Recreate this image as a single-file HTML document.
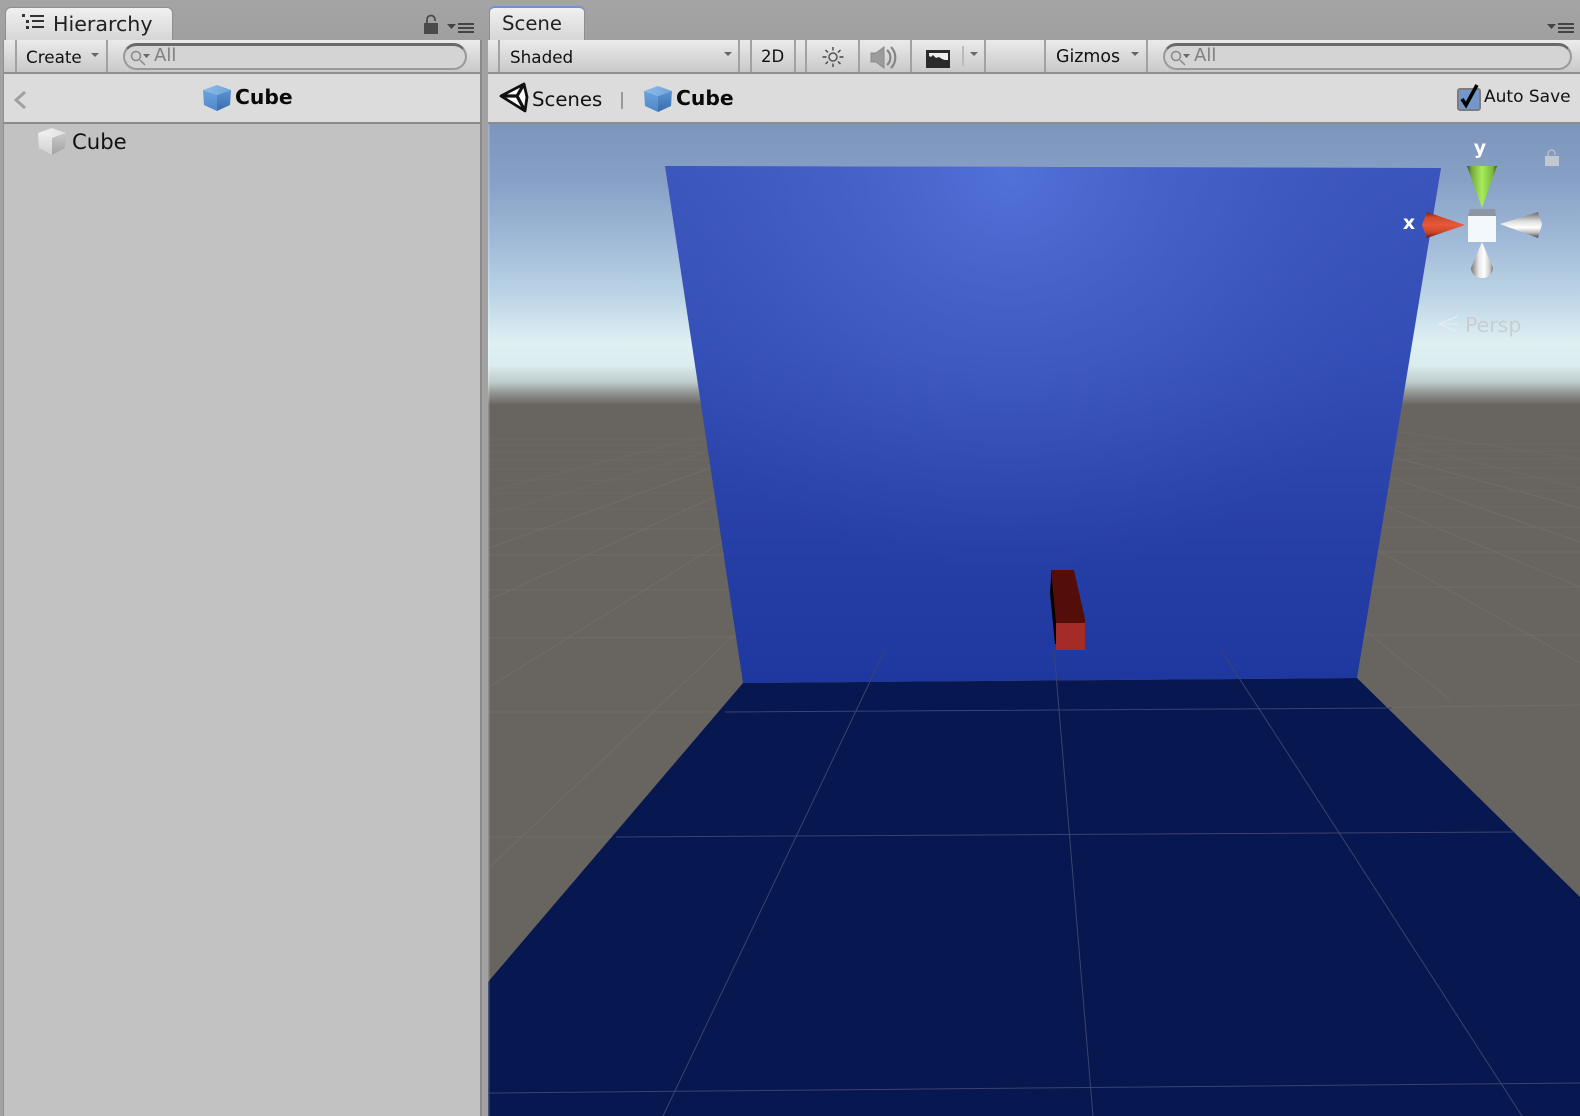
<!DOCTYPE html>
<html><head><meta charset="utf-8"><title>Unity Scene</title>
<style>
html,body{margin:0;padding:0;width:1580px;height:1116px;overflow:hidden;background:#a2a2a2}
body{position:relative;font-family:"DejaVu Sans","Liberation Sans",sans-serif;color:#111}
.a{position:absolute}
.t{position:absolute;white-space:nowrap;line-height:1}
.bar{position:absolute;top:40px;height:32px;background:linear-gradient(#ebebeb,#c9c9c9);border-bottom:2px solid #8f8f8f}
.sep{position:absolute;top:40px;height:32px;width:2px;background:#a2a2a2}
.tab{position:absolute;background:linear-gradient(#f0f0f0,#d6d6d6);box-sizing:border-box;border:1px solid #8e8e8e;border-bottom:0;border-radius:6px 6px 0 0}
.search{position:absolute;top:43px;height:27px;box-sizing:border-box;border:2px solid #999;border-top:3px solid #6a6a6a;border-radius:14px;background:#d4d4d4}
.crumb{position:absolute;top:74px;height:48px;background:#dcdcdc;border-bottom:2px solid #8c8c8c}
svg{position:absolute;overflow:visible}
</style></head><body>

<div class="a" style="left:0;top:0;width:1580px;height:40px;background:linear-gradient(#a4a4a4,#a0a0a0)"></div>

<!-- left panel -->
<div class="a" style="left:3px;top:40px;width:477px;height:1076px;background:#c2c2c2;border-left:1px solid #8f8f8f;box-sizing:border-box"></div>
<div class="a" style="left:480px;top:40px;width:2px;height:1076px;background:#8b8b8b"></div>
<div class="bar" style="left:4px;width:476px"></div>
<div class="crumb" style="left:4px;width:476px"></div>
<div class="sep" style="left:15px"></div>
<div class="sep" style="left:106px"></div>
<div class="tab" style="left:5px;top:7px;width:168px;height:33px"></div>
<div class="t" style="left:53px;top:14px;font-size:20.600px;color:#222">Hierarchy</div>
<svg style="left:0;top:0" width="480" height="124">
  <g fill="#333"><rect x="22" y="14" width="3" height="3"/><rect x="26" y="20" width="3" height="3"/><rect x="26" y="26" width="3" height="3"/>
  <rect x="30" y="15" width="14" height="2"/><rect x="32" y="20" width="12" height="2"/><rect x="32" y="26" width="12" height="2"/></g>
  <rect x="424" y="23" width="14" height="11" fill="#4a4a4a"/>
  <path d="M427 23v-3.500a4 4 0 0 1 8 0V21" fill="none" stroke="#4a4a4a" stroke-width="1.800"/>
  <path d="M447 24h9l-4.500 5z" fill="#444"/>
  <g fill="#444"><rect x="458" y="23" width="16" height="2"/><rect x="458" y="27" width="16" height="2"/><rect x="458" y="31" width="16" height="2"/></g>
  <path d="M91 53h8l-4 4z" fill="#666"/>
  <path d="M25 92l-9 8 9 8" fill="none" stroke="#a0a0a0" stroke-width="3"/>
</svg>
<div class="t" style="left:26px;top:49px;font-size:16.800px">Create</div>
<div class="search" style="left:123px;width:344px"></div>
<svg style="left:120px;top:40px" width="40" height="32">
  <g fill="none" stroke="#888" stroke-width="1.500"><circle cx="16" cy="16" r="4.500"/><path d="M20 20l5 5"/></g>
  <path d="M23 14h7l-3.500 4z" fill="#666"/>
</svg>
<div class="t" style="left:154px;top:47px;font-size:18px;color:#7f7f7f">All</div>

<svg style="left:203px;top:84px" width="30" height="28" viewBox="0 0 30 28">
  <defs>
    <linearGradient id="bt" x1="0" y1="0" x2="1" y2="0"><stop offset="0" stop-color="#8fbce8"/><stop offset="1" stop-color="#6ea3dc"/></linearGradient>
    <linearGradient id="bl" x1="0" y1="0" x2="0" y2="1"><stop offset="0" stop-color="#6ba3df"/><stop offset="1" stop-color="#4f86c6"/></linearGradient>
    <linearGradient id="br" x1="0" y1="0" x2="0" y2="1"><stop offset="0" stop-color="#5b94d2"/><stop offset="1" stop-color="#3a6dae"/></linearGradient>
    <linearGradient id="gt" x1="0" y1="0" x2="1" y2="0"><stop offset="0" stop-color="#f4f4f4"/><stop offset="1" stop-color="#e0e0e0"/></linearGradient>
    <linearGradient id="gl" x1="0" y1="0" x2="0" y2="1"><stop offset="0" stop-color="#eeeeee"/><stop offset="1" stop-color="#d0d0d0"/></linearGradient>
    <linearGradient id="gr" x1="0" y1="0" x2="0" y2="1"><stop offset="0" stop-color="#c9c9c9"/><stop offset="1" stop-color="#a2a2a2"/></linearGradient>
  </defs>
  <path d="M14 1L28 6 14 11 0 6z" fill="url(#bt)"/><path d="M0 6l14 5v16L1 21z" fill="url(#bl)"/><path d="M28 6L14 11v16l13-6z" fill="url(#br)"/>
</svg>
<div class="t" style="left:235px;top:87px;font-size:20.300px;font-weight:bold;color:#0a0a0a">Cube</div>

<svg style="left:38px;top:128px" width="30" height="28" viewBox="0 0 30 28">
  <path d="M14 0L28 5 14 10 0 5z" fill="url(#gt)"/><path d="M0 5l14 5v17L1 20z" fill="url(#gl)"/><path d="M28 5L14 10v17l13-7z" fill="url(#gr)"/>
</svg>
<div class="t" style="left:72px;top:131px;font-size:21.200px;color:#111">Cube</div>

<!-- scene tools -->
<div class="a" style="left:488px;top:40px;width:1092px;height:84px;background:#dcdcdc"></div>
<div class="bar" style="left:488px;width:1092px"></div>
<div class="crumb" style="left:488px;width:1092px"></div>
<div class="tab" style="left:489px;top:6px;width:96px;height:34px;border-top:2px solid #6b94d6"></div>
<div class="t" style="left:502px;top:14px;font-size:19.700px;color:#222">Scene</div>
<div class="sep" style="left:498px"></div><div class="sep" style="left:738px"></div><div class="sep" style="left:750px"></div>
<div class="sep" style="left:794px"></div><div class="sep" style="left:805px"></div><div class="sep" style="left:858px"></div>
<div class="sep" style="left:910px"></div><div class="sep" style="left:984px"></div><div class="sep" style="left:1044px"></div><div class="sep" style="left:1146px"></div>
<div class="a" style="left:962px;top:46px;width:2px;height:20px;background:#bbb"></div>
<div class="t" style="left:510px;top:49px;font-size:16.800px">Shaded</div>
<div class="t" style="left:761px;top:49px;font-size:16.500px">2D</div>
<div class="t" style="left:1056px;top:49px;font-size:17.400px">Gizmos</div>
<div class="search" style="left:1163px;width:409px"></div>
<div class="t" style="left:1194px;top:47px;font-size:18px;color:#7f7f7f">All</div>
<svg style="left:0;top:0" width="1580" height="124">
  <g fill="#666"><path d="M724 52h8l-4 4z"/><path d="M970 52h8l-4 4z"/><path d="M1131 52h8l-4 4z"/></g>
  <g fill="none" stroke="#888" stroke-width="1.500"><circle cx="1176" cy="56" r="4.500"/><path d="M1180 60l5 5"/></g>
  <path d="M1183 54h7l-3.500 4z" fill="#666"/>
  <!-- sun -->
  <circle cx="833" cy="57" r="4" fill="#ddd" stroke="#555" stroke-width="1.500"/>
  <path d="M833 47v3.500M833 63.500v3.500M822.500 57h4M839.500 57h4M825.500 50l2.500 2.500M838 61.500l2.500 2.500M840.500 50L838 52.500M828 61.500L825.500 64" stroke="#444" stroke-width="1.400" fill="none"/>
  <!-- speaker -->
  <path d="M871 53h5l8-6v21l-8-6h-5z" fill="#9c9c9c" stroke="#8a8a8a"/>
  <path d="M887 50a10 10 0 0 1 0 15M891 47a15 15 0 0 1 0 21" fill="none" stroke="#858585" stroke-width="2.200"/>
  <!-- image -->
  <rect x="926" y="50" width="24" height="18" fill="#2a2a2a"/>
  <path d="M929 53h19v7l-3 0-3-1-3-2-3 1-3-3-2 2-2-1z" fill="#ededed"/>
  <!-- menu right -->
  <path d="M1547 24h9l-4.500 5z" fill="#444"/>
  <g fill="#444"><rect x="1558" y="23" width="16" height="2"/><rect x="1558" y="27" width="16" height="2"/><rect x="1558" y="31" width="16" height="2"/></g>
  <!-- unity logo -->
  <polygon points="524,84 527,97 525,111 501,96" fill="#fff" stroke="#111" stroke-width="2.800" stroke-linejoin="round"/>
  <path d="M501 96H517L524 84M517 96L525 111" fill="none" stroke="#111" stroke-width="3.200"/>
  <rect x="621" y="92" width="2" height="17" fill="#9a9a9a"/>
  <g transform="translate(644,85)"><path d="M14 1L28 6 14 11 0 6z" fill="url(#bt)"/><path d="M0 6l14 5v16L1 21z" fill="url(#bl)"/><path d="M28 6L14 11v16l13-6z" fill="url(#br)"/></g>
  <!-- checkbox -->
  <rect x="1458" y="89" width="22" height="21" rx="2" fill="#7396cb" stroke="#7d7d7d" stroke-width="2"/>
  <path d="M1462 99l4 6 11-20" fill="none" stroke="#000" stroke-width="3.600"/>
</svg>
<div class="t" style="left:532px;top:90px;font-size:19.700px;color:#111">Scenes</div>
<div class="t" style="left:676px;top:88px;font-size:20.300px;font-weight:bold;color:#0a0a0a">Cube</div>
<div class="t" style="left:1484px;top:89px;font-size:17px;color:#111">Auto Save</div>

<!-- viewport -->
<svg style="left:488px;top:124px" width="1092" height="992" viewBox="488 124 1092 992">
  <defs>
    <linearGradient id="sky" gradientUnits="userSpaceOnUse" x1="0" y1="124" x2="0" y2="405">
      <stop offset="0" stop-color="#7d95bc"/><stop offset=".2" stop-color="#86a0c6"/><stop offset=".42" stop-color="#a1bad8"/>
      <stop offset=".62" stop-color="#bdd6e6"/><stop offset=".78" stop-color="#dff0f3"/><stop offset=".86" stop-color="#dbecee"/>
      <stop offset=".92" stop-color="#bccaca"/><stop offset=".96" stop-color="#8f928f"/><stop offset="1" stop-color="#696561"/>
    </linearGradient>
    <linearGradient id="wl" gradientUnits="userSpaceOnUse" x1="0" y1="166" x2="0" y2="683">
      <stop offset="0" stop-color="#3a55bb"/><stop offset=".35" stop-color="#334eb6"/><stop offset=".7" stop-color="#2740a8"/><stop offset="1" stop-color="#1e389f"/>
    </linearGradient>
    <radialGradient id="wr" gradientUnits="userSpaceOnUse" cx="1010" cy="175" r="400" gradientTransform="translate(1010 175) scale(1.100 1) translate(-1010 -175)">
      <stop offset="0" stop-color="#5372da" stop-opacity=".95"/><stop offset=".5" stop-color="#4a66cc" stop-opacity=".5"/><stop offset="1" stop-color="#3a55bb" stop-opacity="0"/>
    </radialGradient>
    <linearGradient id="gx" gradientUnits="userSpaceOnUse" x1="1467" y1="0" x2="1497" y2="0"><stop offset="0" stop-color="#33501a"/><stop offset=".15" stop-color="#78a83c"/><stop offset=".5" stop-color="#a8ec5c"/><stop offset=".85" stop-color="#7cb840"/><stop offset="1" stop-color="#3a5a1c"/></linearGradient>
    <linearGradient id="rx" gradientUnits="userSpaceOnUse" x1="0" y1="212" x2="0" y2="238"><stop offset="0" stop-color="#6a2214"/><stop offset=".2" stop-color="#d24a2c"/><stop offset=".5" stop-color="#e8583a"/><stop offset=".8" stop-color="#c84528"/><stop offset="1" stop-color="#5e1c10"/></linearGradient>
    <linearGradient id="wx" gradientUnits="userSpaceOnUse" x1="0" y1="212" x2="0" y2="238"><stop offset="0" stop-color="#666"/><stop offset=".35" stop-color="#ddd"/><stop offset=".6" stop-color="#fff"/><stop offset=".8" stop-color="#bbb"/><stop offset="1" stop-color="#444"/></linearGradient>
    <linearGradient id="wy" gradientUnits="userSpaceOnUse" x1="1471" y1="0" x2="1493" y2="0"><stop offset="0" stop-color="#777"/><stop offset=".35" stop-color="#e6e6e6"/><stop offset=".6" stop-color="#fff"/><stop offset=".85" stop-color="#ccc"/><stop offset="1" stop-color="#777"/></linearGradient>
  </defs>
  <rect x="488" y="124" width="1092" height="992" fill="#686460"/>
  <rect x="488" y="124" width="1092" height="281" fill="url(#sky)"/>

  <!-- ground grid -->
  <g stroke="#716d69" stroke-width="1" fill="none">
    <path d="M489 837H860M489 712H900M489 638L760 637M489 590H760M489 555H760M489 529H760"/>
    <path d="M1340 708L1580 705M1340 635H1580M1340 587H1580M1340 552H1580M1340 527H1580"/>
    <path d="M676 690L489 868M666 700L736 633M489 687L722 542M489 600L714 497M489 548L710 468"/>
    <path d="M1365 630L1450 700M1380 552L1580 663M1387 507L1580 587M1390 477L1580 542M1397 458L1580 508"/>
  </g>
  <g stroke="#6d6965" stroke-width="1" fill="none">
    <path d="M489 509H760M489 493H760M489 480H760M489 469H760M489 460H760M489 452H760M489 445H760M489 439H760"/>
    <path d="M1340 507H1580M1340 491H1580M1340 478H1580M1340 468H1580M1340 459H1580M1340 451H1580M1340 444H1580"/>
    <path d="M489 515L706 452M489 491L702 437M1395 443L1580 488M1400 432L1580 459"/>
  </g>
  <!-- floor -->
  <polygon points="743,683 1357,678 1580,897 1580,1116 488,1116 488,982" fill="#07174f"/>
  <!-- wall -->
  <polygon points="665,166 1441,168 1357,678 743,683" fill="url(#wl)"/>
  <polygon points="665,166 1441,168 1357,678 743,683" fill="url(#wr)"/>
  <!-- floor grid -->
  <g stroke="#39446f" stroke-width="1" fill="none">
    <path d="M725 712L1392 708M616 837L1513 832M489 1093L1580 1083"/>
    <path d="M885 650L663 1116M1054 650L1093 1116M1221 650L1522 1116"/>
  </g>
  <!-- cube -->
  <polygon points="1051,578 1050,593 1055,644 1057,644 1057,620 1051,570" fill="#000"/>
  <polygon points="1051,570 1074,570 1085,619 1085,623 1056,623" fill="#530e0a"/>
  <rect x="1056" y="623" width="29" height="27" fill="#a52c26"/>

  <!-- gizmo -->
  <polygon points="1467,166 1497,166 1482,208" fill="url(#gx)"/>
  <polygon points="1427,212 1465,225 1427,238 1422,225" fill="url(#rx)"/>
  <polygon points="1538,212 1500,224 1538,238 1542,224" fill="url(#wx)"/>
  <path d="M1482 242L1471 268a11 10 0 0 0 22 0z" fill="url(#wy)"/>
  <polygon points="1470,209 1495,209 1496,216 1468,216" fill="#8c95a4"/>
  <rect x="1468" y="216" width="28" height="26" fill="#f3f8fd"/>
  <text x="1480" y="154" font-family="'DejaVu Sans',sans-serif" font-weight="bold" font-size="19" fill="#fff" text-anchor="middle">y</text>
  <text x="1409" y="229" font-family="'DejaVu Sans',sans-serif" font-weight="bold" font-size="19" fill="#fff" text-anchor="middle">x</text>
  <rect x="1545" y="156" width="14" height="10" fill="#c3c7d0"/>
  <path d="M1548 156v-2.500a3.500 3.500 0 0 1 7 0V155" fill="none" stroke="#b4bbc9" stroke-width="1.500"/>
  <path d="M1458 316l-19 8 19 8M1441 324h17" fill="none" stroke="#e6eef3" stroke-width="1.500" opacity=".75"/>
  <text x="1465" y="332" font-family="'DejaVu Sans',sans-serif" font-size="20.500" fill="#c9cbcd" opacity=".9">Persp</text>
  <rect x="488" y="124" width="1.500" height="992" fill="#fff" opacity=".25"/>
</svg>
</body></html>
